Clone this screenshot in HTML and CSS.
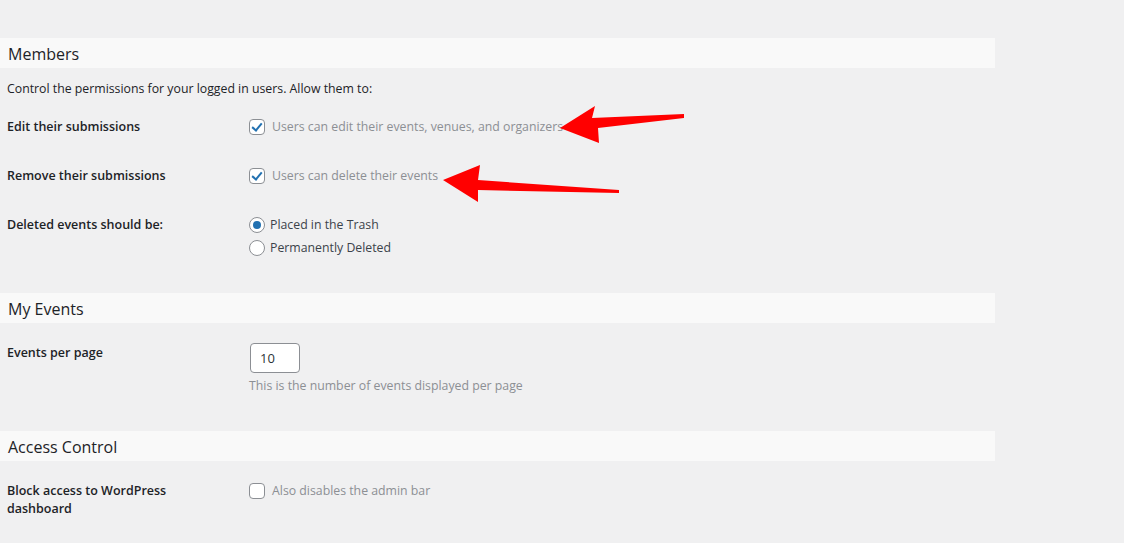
FILE: index.html
```html
<!DOCTYPE html>
<html lang="en">
<head>
    <meta charset="UTF-8">
    <meta name="viewport" content="width=device-width, initial-scale=1.0">
    <title>Community Events - Settings</title>
    <link rel="stylesheet" href="styles.css">
</head>
<body>
    <div class="page">
        <div class="section">
            <h2 class="section-title">Members</h2>
            <p class="intro">Control the permissions for your logged in users. Allow them to:</p>
            <div class="form-row">
                <div class="row-label">Edit their submissions</div>
                <div class="row-field">
                    <label class="check muted"><span class="box checked"></span>Users can edit their events, venues, and organizers</label>
                </div>
            </div>
            <div class="form-row">
                <div class="row-label">Remove their submissions</div>
                <div class="row-field">
                    <label class="check muted"><span class="box checked"></span>Users can delete their events</label>
                </div>
            </div>
            <div class="form-row">
                <div class="row-label">Deleted events should be:</div>
                <div class="row-field">
                    <label class="radio"><span class="dot selected"></span>Placed in the Trash</label>
                    <label class="radio"><span class="dot"></span>Permanently Deleted</label>
                </div>
            </div>
        </div>

        <div class="section">
            <h2 class="section-title">My Events</h2>
            <div class="form-row">
                <div class="row-label">Events per page</div>
                <div class="row-field">
                    <input type="text" class="small-input" value="10">
                    <p class="help">This is the number of events displayed per page</p>
                </div>
            </div>
        </div>

        <div class="section">
            <h2 class="section-title">Access Control</h2>
            <div class="form-row">
                <div class="row-label two-line">Block access to WordPress dashboard</div>
                <div class="row-field">
                    <label class="check muted"><span class="box"></span>Also disables the admin bar</label>
                </div>
            </div>
        </div>

        <!-- annotation arrows drawn over the screenshot -->
        <svg class="arrows" width="1124" height="543" viewBox="0 0 1124 543">
            <polygon points="560,128 595,106 592,118 684,114 684,118 598,128 599,143" fill="#ff0000"/>
            <polygon points="443,180 480,165 478,180 619,190 619,193 478,190 478,202" fill="#ff0000"/>
        </svg>
    </div>
</body>
</html>
```

FILE: styles.css
```css
body {
    margin: 0;
    background-color: #f0f0f1;
    font-family: "Open Sans", "Noto Sans", sans-serif;
    font-size: 12.3px;
    color: #1d2327;
}

.page {
    position: relative;
    width: 1124px;
    height: 543px;
    padding-top: 38px;
    box-sizing: border-box;
    overflow: hidden;
}

.section + .section {
    margin-top: 23px;
}

.section-title {
    width: 995px;
    height: 30px;
    margin: 0;
    padding-left: 8px;
    box-sizing: border-box;
    background-color: #f9f9f9;
    font-size: 16px;
    font-weight: 400;
    line-height: 32px;
    color: #1d2327;
}

.intro {
    margin: 11px 0 -2px;
    padding-left: 7px;
    line-height: 20px;
    color: #1d2327;
}

.form-row {
    display: grid;
    grid-template-columns: 242px 1fr;
    padding: 20px 0 9px 7px;
    line-height: 20px;
}

.row-label {
    font-size: 12.5px;
    font-weight: 600;
    color: #1d2327;
}

.row-label.two-line {
    width: 170px;
    line-height: 18px;
    padding-top: 1px;
}

.check,
.radio {
    display: flex;
    align-items: center;
}

.radio {
    height: 20px;
    margin-bottom: 3px;
    color: #3c434a;
}

.muted {
    color: #8c8f94;
}

.box {
    width: 14px;
    height: 14px;
    margin-right: 7px;
    border: 1px solid #8c8f94;
    border-radius: 4px;
    background-color: #fff;
    position: relative;
}

.box.checked::after {
    content: "";
    position: absolute;
    left: 4px;
    top: 1px;
    width: 4px;
    height: 8px;
    border-right: 2px solid #2271b1;
    border-bottom: 2px solid #2271b1;
    transform: rotate(40deg);
}

.dot {
    width: 14px;
    height: 14px;
    margin-right: 5px;
    border: 1px solid #8c8f94;
    border-radius: 50%;
    background-color: #fff;
    position: relative;
}

.dot.selected::after {
    content: "";
    position: absolute;
    left: 3px;
    top: 3px;
    width: 8px;
    height: 8px;
    border-radius: 50%;
    background-color: #2271b1;
}

.small-input {
    display: block;
    width: 50px;
    height: 30px;
    margin: 0 0 0 1px;
    padding: 0 9px;
    box-sizing: border-box;
    border: 1px solid #8c8f94;
    border-radius: 4px;
    background-color: #fff;
    font-family: inherit;
    font-size: 13px;
    color: #2c3338;
}

.help {
    margin: 3px 0 3px;
    color: #8c8f94;
}

.arrows {
    position: absolute;
    top: 0;
    left: 0;
    pointer-events: none;
}
```
